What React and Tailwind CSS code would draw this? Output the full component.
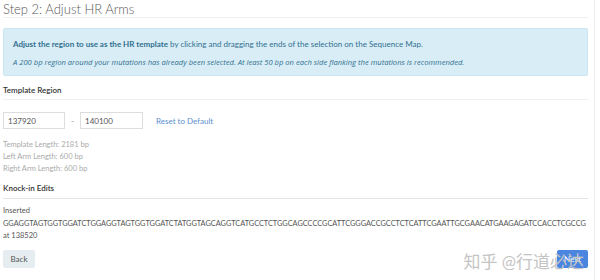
import React from 'react';

const seq = 'GGAGGTAGTGGTGGATCTGGAGGTAGTGGTGGATCTATGGTAGCAGGTCATGCCTCTGGCAGCCCCGCATTCGGGACCGCCTCTCATTCGAATTGCGAACATGAAGAGATCCACCTCGCCG';

const App = () => {
  return (
    <div className="w-[600px] h-[280px] bg-white overflow-hidden" style={{ fontFamily: 'Lato, "Noto Sans CJK SC", sans-serif' }}>
      <div className="relative w-[595px] h-[280px] border-r border-[#eeeeee] pl-[3px] pr-[6px]">
        {/* Title */}
        <div className="border-b border-[#f0f0f0] pt-[2px] pb-[1px]">
          <h2 className="text-[13px] leading-[14px] text-[#5a5a5a] font-light">Step 2: Adjust HR Arms</h2>
        </div>

        {/* Info box */}
        <div className="mt-[10px] h-[48px] bg-[#d9edf7] border border-[#c8e5f0] rounded-[2px] px-[9px] pt-[10px] text-[8px] leading-[10px] text-[#31708f]">
          <p>
            <span className="font-bold">Adjust the region to use as the HR template</span> by clicking and dragging the ends of the selection on the Sequence Map.
          </p>
          <p className="mt-[8px] text-[7.6px]" style={{ fontFamily: '"Open Sans", sans-serif', fontStyle: 'italic' }}>
            A 200 bp region around your mutations has already been selected. At least 50 bp on each side flanking the mutations is recommended.
          </p>
        </div>

        {/* Template Region */}
        <div className="mt-[9px] border-b border-[#f0f0f0] pb-[4px]">
          <div className="text-[8px] leading-[10px] text-[#333333] font-semibold">Template Region</div>
        </div>

        <div className="mt-[12px] flex items-center h-[17px] text-[8px] text-[#555555]">
          <div className="w-[62px] h-[17px] border border-[#dddddd] flex items-center px-[4px]">137920</div>
          <span className="w-[15px] text-center text-[#888888]">-</span>
          <div className="w-[63px] h-[17px] border border-[#dddddd] flex items-center px-[4px]">140100</div>
          <span className="ml-[13px] text-[#5b8fcf]">Reset to Default</span>
        </div>

        <div className="mt-[10px] text-[7.5px] leading-[12px] text-[#aaaaaa]">
          <div>Template Length: 2181 bp</div>
          <div>Left Arm Length: 600 bp</div>
          <div>Right Arm Length: 600 bp</div>
        </div>

        {/* Knock-in Edits */}
        <div className="mt-[8px] border-b border-[#e5e5e5] pb-[5px]">
          <div className="text-[8px] leading-[10px] text-[#333333] font-semibold">Knock-in Edits</div>
        </div>

        <div className="mt-[6px] text-[7.5px] leading-[12.5px] text-[#555555] whitespace-nowrap">
          <div>Inserted</div>
          <div className="text-[7.35px]">{seq}</div>
          <div>at 138520</div>
        </div>

        {/* Buttons */}
        <div className="mt-[7px] flex items-center justify-between">
          <button className="w-[32px] h-[18px] bg-[#e6edf0] rounded-[2px] text-[8px] text-[#555555]">Back</button>
          <button className="w-[31px] h-[18px] bg-[#4a86e0] rounded-[2px] text-[8px] text-white">Next</button>
        </div>

        {/* Watermark */}
        <div className="absolute right-[10px] bottom-[8px] text-[17px] leading-[20px] text-[#c4c4c4] pointer-events-none">
          知乎 @行道必达
        </div>
      </div>
    </div>
  );
};

export default App;
